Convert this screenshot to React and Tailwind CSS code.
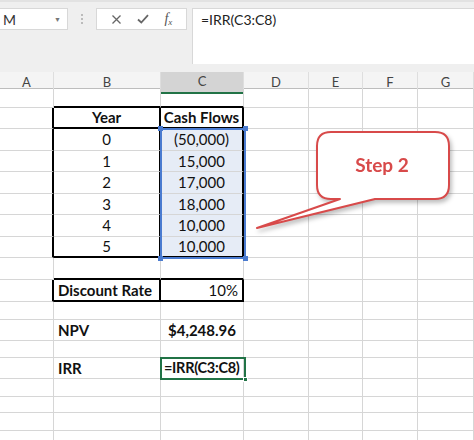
import React from 'react';

const COLS = 'grid grid-cols-[54px_107px_83px_65px_54px_55px_1fr]';
const LETTERS = ['A', 'B', 'C', 'D', 'E', 'F', 'G'];

// k = black 2px border, otherwise light gridline
const rows = [
  { h: 'h-[19px]', cells: { 1: { b: 'k' }, 2: { b: 'k' } } },
  { h: 'h-[21px]', cells: { 0: { r: 'k' }, 1: { r: 'k', b: 'k', t: 'Year', bold: true }, 2: { r: 'k', b: 'k', t: 'Cash Flows', bold: true } } },
  { h: 'h-[22px]', cells: { 0: { r: 'k' }, 1: { r: 'k', t: '0' }, 2: { r: 'k', t: '(50,000)', sel: true } } },
  { h: 'h-[21px]', cells: { 0: { r: 'k' }, 1: { r: 'k', t: '1' }, 2: { r: 'k', t: '15,000', sel: true } } },
  { h: 'h-[22px]', cells: { 0: { r: 'k' }, 1: { r: 'k', t: '2' }, 2: { r: 'k', t: '17,000', sel: true } } },
  { h: 'h-[21px]', cells: { 0: { r: 'k' }, 1: { r: 'k', t: '3' }, 2: { r: 'k', t: '18,000', sel: true } } },
  { h: 'h-[22px]', cells: { 0: { r: 'k' }, 1: { r: 'k', t: '4' }, 2: { r: 'k', t: '10,000', sel: true } } },
  { h: 'h-[21px]', cells: { 0: { r: 'k' }, 1: { r: 'k', b: 'k', t: '5' }, 2: { r: 'k', b: 'k', t: '10,000', sel: true } } },
  { h: 'h-[22px]', cells: { 1: { b: 'k' }, 2: { b: 'k' } } },
  { h: 'h-[22px]', cells: { 0: { r: 'k' }, 1: { r: 'k', b: 'k', t: 'Discount Rate', bold: true, left: true }, 2: { r: 'k', b: 'k', t: '10%', right: true } } },
  { h: 'h-[18px]', cells: {} },
  { h: 'h-[21px]', cells: { 1: { t: 'NPV', bold: true, left: true }, 2: { t: '$4,248.96', bold: true } } },
  { h: 'h-[17px]', cells: {} },
  { h: 'h-[21px]', cells: { 1: { t: 'IRR', bold: true, left: true }, 2: { t: '=IRR(C3:C8)', bold: true, left: true, tight: true } } },
  { h: 'h-[18px]', cells: {} },
  { h: 'h-[16px]', cells: {} },
  { h: 'h-[18px]', cells: {} },
  { h: 'h-[18px]', cells: {} },
];

function Cell({ c = {} }) {
  const right = c.r === 'k' ? 'border-r-2 border-r-black' : 'border-r border-r-[#d6d6d6]';
  const bottom = c.b === 'k' ? 'border-b-2 border-b-black' : 'border-b border-b-[#d6d6d6]';
  const align = c.left ? (c.tight ? 'justify-start pl-[3px]' : 'justify-start pl-1') : c.right ? 'justify-end pr-1' : 'justify-center';
  return (
    <div
      className={`${right} ${bottom} ${align} ${c.sel ? 'bg-[#e6ecf6]' : ''} ${c.bold ? 'font-bold' : ''} ${c.tight ? 'text-[14.5px] tracking-[-0.3px]' : 'text-[15px]'} flex items-center whitespace-nowrap leading-none text-[#111]`}
    >
      {c.t}
    </div>
  );
}

export default function App() {
  return (
    <div className="relative w-[474px] h-[440px] overflow-hidden bg-white font-[Lato,sans-serif]">
      {/* Formula bar area */}
      <div className="h-[72px] bg-[#efefef] border-t-2 border-[#e2e2e2] flex items-start pt-[6px]">
        <div className="w-[68px] h-[22px] bg-white border border-[#d8d8d8] border-l-0 flex items-center justify-between pl-[3px] pr-[6px]">
          <span className="text-[14px] text-[#333]">M</span>
          <span className="text-[7px] text-[#777]">▼</span>
        </div>
        <div className="w-[28px] h-[22px] flex flex-col items-center justify-center gap-[2px]">
          <span className="w-[2px] h-[2px] bg-[#bbb]" />
          <span className="w-[2px] h-[2px] bg-[#bbb]" />
          <span className="w-[2px] h-[2px] bg-[#bbb]" />
        </div>
        <div className="w-[91px] h-[22px] bg-white border border-[#d8d8d8] flex items-center justify-around px-[6px]">
          <svg width="11" height="11" viewBox="0 0 11 11">
            <path d="M1.5 1.5L9.5 9.5M9.5 1.5L1.5 9.5" stroke="#666" strokeWidth="1.3" />
          </svg>
          <svg width="12" height="10" viewBox="0 0 12 10">
            <path d="M1 5.5L4.3 8.5L11 1.2" stroke="#666" strokeWidth="1.8" fill="none" />
          </svg>
          <span className="font-['Liberation_Serif'] italic text-[14px] text-[#555] leading-none">
            f<sub className="text-[9px]">x</sub>
          </span>
        </div>
        <div className="ml-[5px] flex-1 h-[56px] bg-white border-l border-t border-[#d8d8d8] pl-[8px] flex flex-col">
          <span className="text-[14px] leading-[18px] mt-[2px] text-[#222]">=IRR(C3:C8)</span>
        </div>
      </div>

      {/* Column headers */}
      <div className={`${COLS} h-[17px] bg-[#f4f4f4] border-b border-[#bdbdbd]`}>
        {LETTERS.map((l) => (
          <div
            key={l}
            className={`flex items-center justify-center text-[13px] text-[#444] border-r border-[#dedede] ${l === 'C' ? 'bg-[#d4d4d4] border-b-2 border-b-[#217346]' : ''}`}
          >
            {l}
          </div>
        ))}
      </div>

      {/* Sheet body */}
      <div className="relative">
        {rows.map((row, i) => (
          <div key={i} className={`${COLS} ${row.h}`}>
            {LETTERS.map((l, j) => (
              <Cell key={l} c={row.cells[j]} />
            ))}
          </div>
        ))}

        {/* selection C3:C8 */}
        <div className="absolute left-[160px] top-[39px] w-[86px] h-[131px] border-2 border-[#4a7bd0] pointer-events-none">
          <span className="absolute -left-[4px] -top-[4px] w-[5px] h-[5px] bg-[#4a7bd0]" />
          <span className="absolute -right-[4px] -top-[4px] w-[5px] h-[5px] bg-[#4a7bd0]" />
          <span className="absolute -left-[4px] -bottom-[4px] w-[5px] h-[5px] bg-[#4a7bd0]" />
          <span className="absolute -right-[4px] -bottom-[4px] w-[5px] h-[5px] bg-[#4a7bd0]" />
        </div>

        {/* active cell C14 */}
        <div className="absolute left-[160px] top-[268px] w-[86px] h-[23px] border-2 border-[#217346] pointer-events-none">
          <span className="absolute -right-[4px] -bottom-[4px] w-[5px] h-[5px] bg-[#217346] border border-white" />
        </div>
      </div>

      {/* Step 2 callout */}
      <svg
        className="absolute left-[250px] top-[125px] drop-shadow-[2px_3px_2px_rgba(0,0,0,0.25)]"
        width="210"
        height="110"
        viewBox="250 125 210 110"
      >
        <path
          d="M331 132 H435 Q449 132 449 146 V185 Q449 199 435 199 H375 L257 228 L340 199 H331 Q317 199 317 185 V146 Q317 132 331 132 Z"
          fill="white"
          stroke="#d84a4a"
          strokeWidth="2"
          strokeLinejoin="round"
        />
        <text x="382" y="172" textAnchor="middle" fontFamily="Lato, sans-serif" fontWeight="700" fontSize="19" fill="#d84a4a">
          Step 2
        </text>
      </svg>
    </div>
  );
}
